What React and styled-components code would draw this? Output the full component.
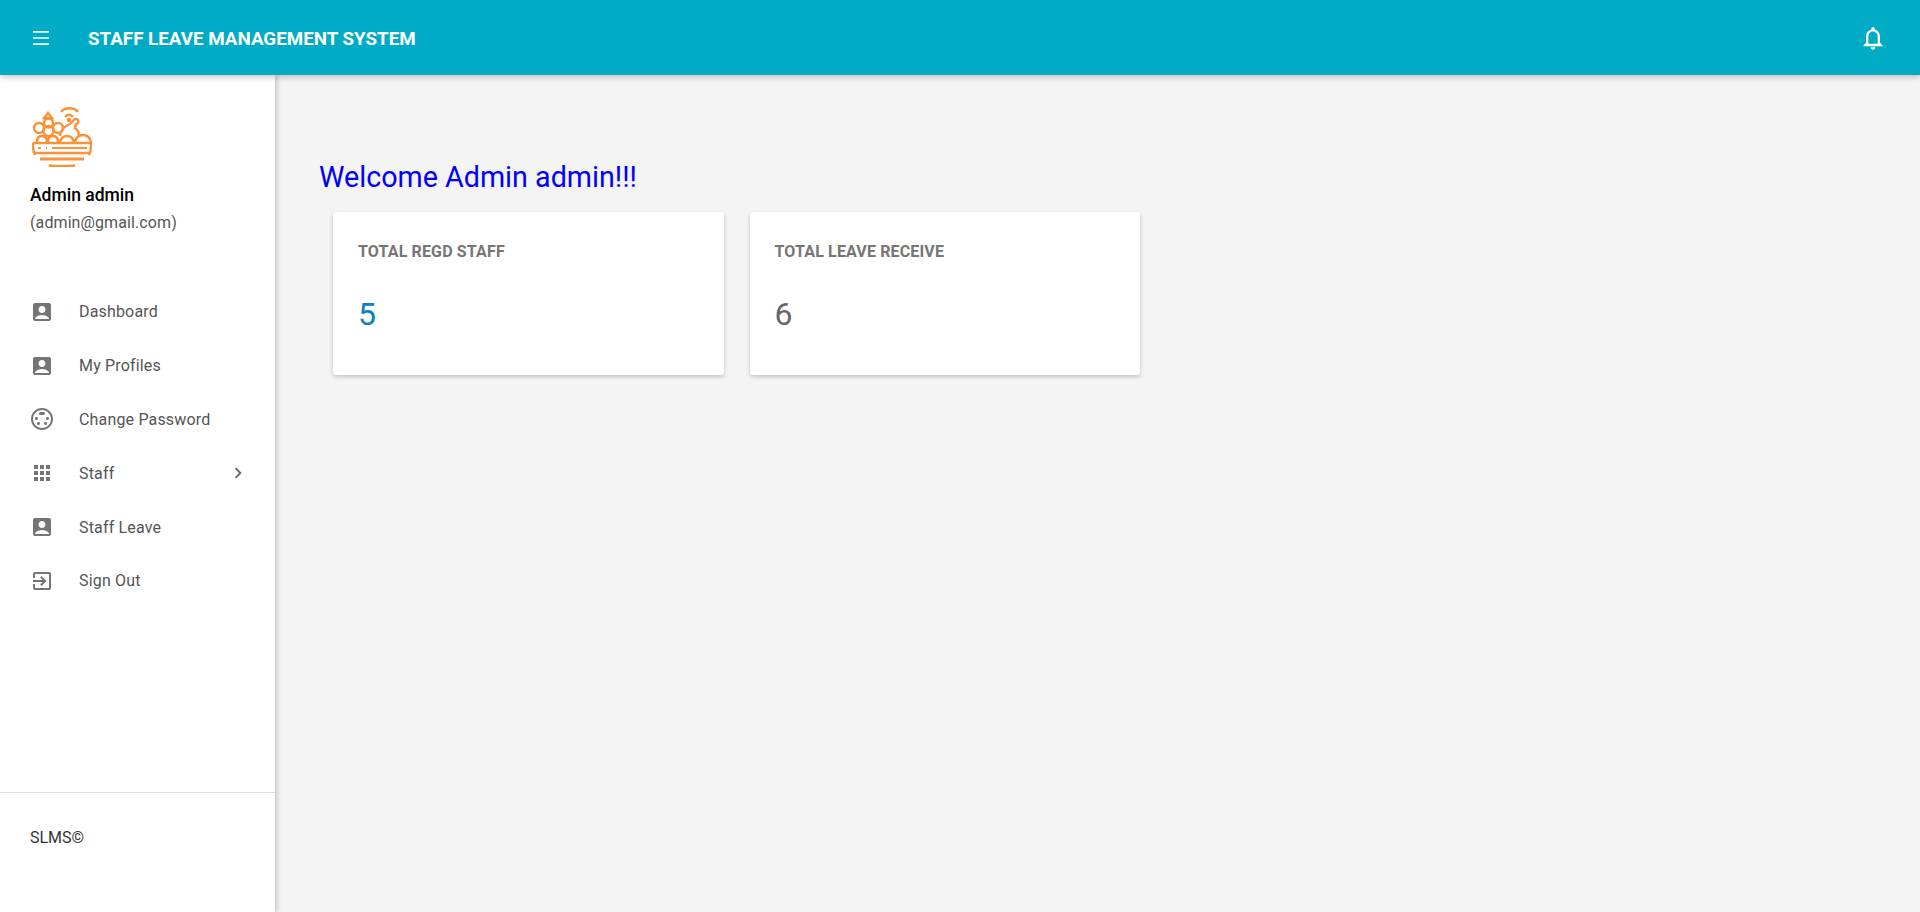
import React from "react";
import styled, { createGlobalStyle } from "styled-components";
import { MdAccountBox, MdSettingsInputSvideo, MdApps, MdExitToApp, MdChevronRight, MdNotificationsNone } from "react-icons/md";

const Global = createGlobalStyle`
  html, body { margin: 0; padding: 0; height: 100%; }
  body { font-family: Roboto, "Liberation Sans", sans-serif; background: #f4f4f4; overflow: hidden; }
`;
const Page = styled.div`display: flex; flex-direction: column; height: 912px; width: 1920px;`;
const Header = styled.header`
  height: 75px; flex: none; background: #00acc5; display: flex; align-items: center; color: #fff;
  padding: 0 33px 0 33px; position: relative; z-index: 2; box-shadow: 0 2px 6px rgba(0,0,0,.24);
`;
const Title = styled.h1`margin: 2px 0 0 39px; font-size: 18.8px; font-weight: 700; line-height: 24px; flex: 1;`;
const Body = styled.div`flex: 1; display: flex; min-height: 0;`;
const Sidebar = styled.aside`
  width: 275px; flex: none; background: #fff; display: flex; flex-direction: column; position: relative; z-index: 1;
  box-shadow: 2px 0 5px rgba(0,0,0,.2);
`;
const Profile = styled.div`padding: 32px 30px 0; height: 200px; box-sizing: border-box;`;
const LogoBox = styled.div`padding-left: 2px;`;
const UserName = styled.div`font-size: 17.5px; font-weight: 500; color: #000; line-height: 20px; margin-top: 18px;`;
const Email = styled.div`font-size: 16px; color: #555; line-height: 20px; margin-top: 8px; letter-spacing: .1px;`;
const Nav = styled.nav`flex: 1; display: flex; flex-direction: column; padding-top: 10px;`;
const Item = styled.a`
  height: 53.8px; display: flex; align-items: center; padding: 0 26px 0 30px; color: #555; font-size: 16px; letter-spacing: .17px;
  & > svg:first-child { font-size: 24px; color: #757575; margin-right: 25px; flex: none; }
`;
const Chevron = styled.span`margin-left: auto; display: flex; font-size: 22px; color: #666;`;
const Footer = styled.footer`height: 120px; box-sizing: border-box; border-top: 1px solid #ddd; padding: 35px 30px; font-size: 16px; line-height: 20px; color: #333;`;
const Main = styled.main`flex: 1; padding: 84px 0 0 44px;`;
const Welcome = styled.h2`margin: 0; font-size: 28.7px; line-height: 36px; font-weight: 400; color: #0000ff;`;
const Cards = styled.div`display: flex; gap: 26px; margin: 17px 0 0 14px;`;
const Card = styled.div`
  width: 390.5px; height: 163px; box-sizing: border-box; background: #fff; border-radius: 3px; padding: 30px 25px;
  box-shadow: 0 2px 4px rgba(0,0,0,.2);
`;
const CardLabel = styled.div`font-size: 16px; font-weight: 700; line-height: 20px; color: #757575; letter-spacing: .15px;`;
const CardValue = styled.div`font-size: 32px; font-weight: 400; line-height: 36px; margin-top: 34px; color: ${p => p.$color};`;

const BurgerIcon = () => (
  <svg width="16" height="16" viewBox="0 0 16 16" fill="#fff" style={{ display: "block" }}>
    <rect y="1" width="16" height="1.7" />
    <rect y="7.2" width="16" height="1.5" />
    <rect y="13.3" width="16" height="1.7" />
  </svg>
);

const Logo = () => (
  <svg width="60" height="60" viewBox="0 0 60 60" fill="none" stroke="#fb9238" strokeWidth="2.4" style={{ display: "block", filter: "blur(.5px)" }}>
    <path d="M16 6l4 5h-8z" />
    <circle cx="7" cy="21" r="5" />
    <circle cx="16.500" cy="16" r="4.500" />
    <circle cx="16.500" cy="24" r="5" />
    <circle cx="26" cy="21" r="5" />
    <path d="M5 35c0-4 2-6 5-6s5 2 5 6 M16 35c0-4 2-6 5-6s5 2 5 6" />
    <path d="M29 5c4-5 13-5 17 0 M33 10c2-3 6-3 8 0" />
    <circle cx="37" cy="13" r="1" fill="#fb9238" />
    <path d="M28 29c0-6 5-10 10-12l3-3c1-2 3-3 5-1 1 2 0 4-2 4l-1 4c3 2 4 5 4 8" />
    <path d="M28 35c1-4 4-6 7-6s6 2 7 6 M43 35c1-5 4-7 8-7s7 3 8 7" />
    <path d="M1 36h58v3c0 4-1 7-2 9 M1 36v3c0 4 1 7 2 9" />
    <path d="M6 41h3M14 41h1M20 41h35" strokeWidth="1.800" />
    <path d="M3 46h54" />
    <path d="M8 52h44" strokeWidth="2.800" />
    <path d="M17 58.500c6 1.200 20 1.200 26 0" strokeWidth="3" />
  </svg>
);

const items = [
  [MdAccountBox, "Dashboard"],
  [MdAccountBox, "My Profiles"],
  [MdSettingsInputSvideo, "Change Password"],
  [MdApps, "Staff", true],
  [MdAccountBox, "Staff Leave"],
  [MdExitToApp, "Sign Out"],
];

export default function App() {
  return (
    <Page>
      <Global />
      <Header>
        <BurgerIcon />
        <Title>STAFF LEAVE MANAGEMENT SYSTEM</Title>
        <MdNotificationsNone size={28} />
      </Header>
      <Body>
        <Sidebar>
          <Profile>
            <LogoBox><Logo /></LogoBox>
            <UserName>Admin admin</UserName>
            <Email>(admin@gmail.com)</Email>
          </Profile>
          <Nav>
            {items.map(([Icon, label, more]) => (
              <Item key={label}>
                <Icon />
                {label}
                {more && <Chevron><MdChevronRight /></Chevron>}
              </Item>
            ))}
          </Nav>
          <Footer>SLMS©</Footer>
        </Sidebar>
        <Main>
          <Welcome>Welcome Admin admin!!!</Welcome>
          <Cards>
            <Card>
              <CardLabel>TOTAL REGD STAFF</CardLabel>
              <CardValue $color="#0a80c4">5</CardValue>
            </Card>
            <Card>
              <CardLabel>TOTAL LEAVE RECEIVE</CardLabel>
              <CardValue $color="#666">6</CardValue>
            </Card>
          </Cards>
        </Main>
      </Body>
    </Page>
  );
}
